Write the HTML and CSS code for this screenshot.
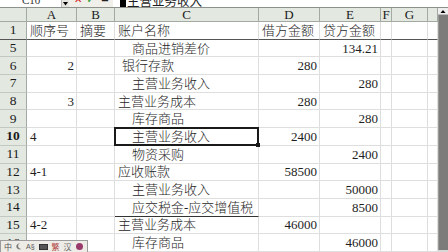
FILE: index.html
```html
<!DOCTYPE html>
<html lang="zh-CN">
<head>
<meta charset="utf-8">
<title>Sheet</title>
<link rel="stylesheet" href="styles.css">
</head>
<body>
<div class="app">
  <div class="fbar">
    <div class="namebox">C10</div>
    <div class="dd"><svg width="7" height="14" viewBox="0 0 7 14"><path d="M1 9 L6 9 L3.5 12.5 Z" fill="#000"/></svg></div>
    <div class="btns"><span class="bx">✕</span><span class="bok">✓</span><span class="beq">=</span></div>
    <div class="formula"><span class="sq"></span><span class="ftext">主营业务收入</span></div>
  </div>
  <div class="main">
    <div class="sheet">
      <div class="h corner"></div><div class="h">A</div><div class="h">B</div><div class="h">C</div><div class="h">D</div><div class="h">E</div><div class="h">F</div><div class="h">G</div><div class="h"></div>

      <div class="rh fz">1</div><div class="c fz">顺序号</div><div class="c fz">摘要</div><div class="c fz">账户名称</div><div class="c fz">借方金额</div><div class="c fz">贷方金额</div><div class="c fz"></div><div class="c fz"></div><div class="c fz"></div>

      <div class="rh">5</div><div class="c"></div><div class="c"></div><div class="c i2">商品进销差价</div><div class="c"></div><div class="c r">134.21</div><div class="c"></div><div class="c"></div><div class="c"></div>

      <div class="rh">6</div><div class="c r">2</div><div class="c"></div><div class="c i1">银行存款</div><div class="c r">280</div><div class="c"></div><div class="c"></div><div class="c"></div><div class="c"></div>

      <div class="rh">7</div><div class="c"></div><div class="c"></div><div class="c i2">主营业务收入</div><div class="c"></div><div class="c r">280</div><div class="c"></div><div class="c"></div><div class="c"></div>

      <div class="rh">8</div><div class="c r">3</div><div class="c"></div><div class="c">主营业务成本</div><div class="c r">280</div><div class="c"></div><div class="c"></div><div class="c"></div><div class="c"></div>

      <div class="rh">9</div><div class="c"></div><div class="c"></div><div class="c i2">库存商品</div><div class="c"></div><div class="c r">280</div><div class="c"></div><div class="c"></div><div class="c"></div>

      <div class="rh act">10</div><div class="c">4</div><div class="c"></div><div class="c i2 sel">主营业务收入</div><div class="c r">2400</div><div class="c"></div><div class="c"></div><div class="c"></div><div class="c"></div>

      <div class="rh">11</div><div class="c"></div><div class="c"></div><div class="c i2">物资采购</div><div class="c"></div><div class="c r">2400</div><div class="c"></div><div class="c"></div><div class="c"></div>

      <div class="rh">12</div><div class="c">4-1</div><div class="c"></div><div class="c">应收账款</div><div class="c r">58500</div><div class="c"></div><div class="c"></div><div class="c"></div><div class="c"></div>

      <div class="rh">13</div><div class="c"></div><div class="c"></div><div class="c i2">主营业务收入</div><div class="c"></div><div class="c r">50000</div><div class="c"></div><div class="c"></div><div class="c"></div>

      <div class="rh">14</div><div class="c"></div><div class="c"></div><div class="c i2 ul">应交税金-应交增值税</div><div class="c"></div><div class="c r">8500</div><div class="c"></div><div class="c"></div><div class="c"></div>

      <div class="rh">15</div><div class="c">4-2</div><div class="c"></div><div class="c">主营业务成本</div><div class="c r">46000</div><div class="c"></div><div class="c"></div><div class="c"></div><div class="c"></div>

      <div class="rh">16</div><div class="c"></div><div class="c"></div><div class="c i2">库存商品</div><div class="c"></div><div class="c r">46000</div><div class="c"></div><div class="c"></div><div class="c"></div>
    </div>
    <div class="vscroll">
      <div class="up"><svg width="10" height="7" viewBox="0 0 10 7"><path d="M2.5 5 L7.5 5 L5 2 Z" fill="#000"/></svg></div>
      <div class="thumb"></div>
    </div>
  </div>
  <div class="ime">
    <span class="ime-zh">中</span>
    <svg class="ime-moon" width="6" height="7" viewBox="0 0 6 7"><path d="M4 0.5 A3 3 0 1 0 5.5 5.5 A2.4 2.4 0 1 1 4 0.5 Z" fill="#777"/></svg>
    <span class="ime-a">A§</span>
    <span class="ime-kb"></span>
    <span class="ime-fan">繁</span>
    <span class="ime-han">汉</span>
    <span class="ime-ic"></span>
  </div>
</div>
</body>
</html>
```
FILE: styles.css
```css
* {
  box-sizing: border-box;
  margin: 0;
  padding: 0;
}

html, body {
  width: 448px;
  height: 252px;
  overflow: hidden;
  background: #fff;
}

body {
  font-family: "Liberation Serif", "Noto Sans CJK SC", serif;
  font-size: 13px;
  color: #1e1e1e;
}

.app {
  position: relative;
  width: 448px;
  height: 252px;
  display: flex;
  flex-direction: column;
}

/* formula bar (cut off at the top) */
.fbar {
  height: 8px;
  flex: none;
  display: flex;
  align-items: flex-end;
  overflow: hidden;
  border-bottom: 1px solid #8c918c;
  background: #fff;
}

.namebox {
  width: 62px;
  height: 14px;
  flex: none;
  padding-left: 22px;
  font-size: 11px;
  line-height: 14px;
  color: #333;
  background: #fff;
  border-right: 1px solid #b8b8b8;
}

.dd {
  width: 7px;
  height: 14px;
  flex: none;
  background: #e6e4de;
}

.dd svg {
  display: block;
}

.btns {
  width: 44px;
  height: 14px;
  flex: none;
  display: flex;
  gap: 4px;
  padding-left: 5px;
  font-family: "DejaVu Sans", sans-serif;
  font-size: 10px;
  line-height: 14px;
  font-weight: bold;
  background: #f1efea;
}

.bx { color: #d01818; }
.bok { color: #199a2a; }
.beq { color: #222; padding-left: 2px; }

.formula {
  flex: 1;
  height: 14px;
  display: flex;
  align-items: flex-end;
  padding-left: 7px;
  background: #fff;
  font-family: "Noto Sans CJK SC", sans-serif;
  font-size: 12.5px;
  line-height: 14px;
}

.sq {
  width: 6px;
  height: 10px;
  background: #000;
  flex: none;
  margin-right: 1px;
}

.ftext {
  height: 14px;
  line-height: 14px;
  padding-top: 1px;
}

/* sheet */
.main {
  flex: 1;
  display: flex;
}

.sheet {
  width: 438px;
  flex: none;
  display: grid;
  grid-template-columns: 27px 50px 38px 144px 61px 61px 11px 36px 10px;
  grid-template-rows: 14px repeat(13, 17.7px);
}

.h, .rh {
  background: #e3e8e1;
  border-right: 1px solid #a3aaa3;
  border-bottom: 1px solid #a3aaa3;
  display: flex;
  align-items: center;
  justify-content: center;
  font-size: 13px;
  color: #1a1a1a;
  line-height: 14px;
}

.rh {
  font-size: 13.5px;
  border-bottom-color: #c2c8c2;
}

.rh.act {
  font-weight: bold;
}

.c {
  border-right: 1px solid #dedede;
  border-bottom: 1px solid #dedede;
  display: flex;
  align-items: center;
  padding: 0 2px 0 3px;
  white-space: nowrap;
  line-height: 17px;
  font-size: 13px;
  font-weight: 300;
}

.c.r {
  justify-content: flex-end;
  padding-right: 2px;
}

.c.i1 { padding-left: 7px; }
.c.i2 { padding-left: 17px; }

.fz {
  border-bottom-color: #555 !important;
}

.c.ul {
  border-bottom-color: #333;
}

.sel {
  position: relative;
}

.sel::before {
  content: "";
  position: absolute;
  left: -1px;
  top: -1px;
  right: -1px;
  bottom: -1px;
  border: 2px solid #1a1a1a;
}

.sel::after {
  content: "";
  position: absolute;
  right: -2px;
  bottom: -2px;
  width: 4px;
  height: 4px;
  background: #1a1a1a;
}

/* scrollbar */
.vscroll {
  width: 10px;
  flex: none;
  display: flex;
  flex-direction: column;
  background: #d8d8d8;
}

.up {
  height: 7px;
  flex: none;
  background: #eeeeee;
  border-bottom: 1px solid #bbb;
}

.up svg {
  display: block;
}

.thumb {
  flex: 1;
  margin: 0 0 2px 0;
  background: #7c7d7a;
  border-left: 1px solid #9a9a98;
}

/* IME toolbar overlay */
.ime {
  position: absolute;
  left: 0;
  top: 240px;
  width: 88px;
  height: 13px;
  display: flex;
  align-items: center;
  gap: 4px;
  padding-left: 3px;
  background: #eeece6;
  border: 1px solid #9c9c9c;
  font-family: "Noto Sans CJK SC", sans-serif;
  font-size: 8px;
  line-height: 11px;
  color: #555;
}

.ime-moon { flex: none; }
.ime-a { font-family: "Liberation Sans", sans-serif; font-size: 7px; }
.ime-kb {
  width: 9px;
  height: 6px;
  flex: none;
  background: #555;
  border: 1px solid #333;
}
.ime-fan { color: #b04040; }
.ime-han { color: #666; }
.ime-ic {
  width: 7px;
  height: 7px;
  flex: none;
  border-radius: 50%;
  background: #9a3a6a;
}
```
